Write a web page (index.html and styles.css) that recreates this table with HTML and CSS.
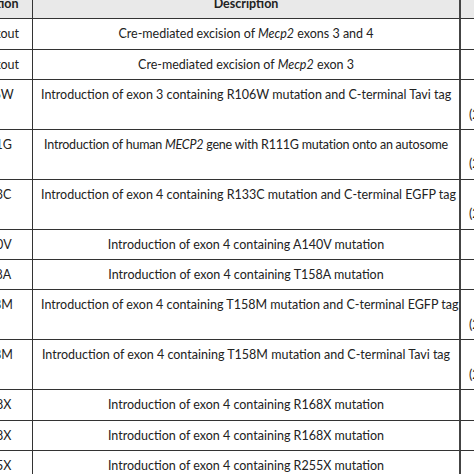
FILE: index.html
```html
<!DOCTYPE html>
<html lang="en">
<head>
<meta charset="utf-8">
<title>Mecp2 mouse models</title>
<link rel="stylesheet" href="styles.css">
</head>
<body>
<div class="viewport">
<table class="models">
  <colgroup>
    <col class="c-mut">
    <col class="c-desc">
    <col class="c-ref">
  </colgroup>
  <thead>
    <tr>
      <th class="mut">Mutation</th>
      <th class="desc">Description</th>
      <th class="ref">Reference</th>
    </tr>
  </thead>
  <tbody>
    <tr>
      <td class="mut">Knockout</td>
      <td class="desc">Cre-mediated excision of <i>Mecp2</i> exons 3 and 4</td>
      <td class="ref">Guy et al, 2001</td>
    </tr>
    <tr>
      <td class="mut">Knockout</td>
      <td class="desc">Cre-mediated excision of <i>Mecp2</i> exon 3</td>
      <td class="ref">Chen et al, 2001</td>
    </tr>
    <tr>
      <td class="mut">R106W</td>
      <td class="desc">Introduction of exon 3 containing R106W mutation and C-terminal Tavi tag</td>
      <td class="ref">Johnson et al<br>(2017)</td>
    </tr>
    <tr>
      <td class="mut">R111G</td>
      <td class="desc tight">Introduction of human <i>MECP2</i> gene with R111G mutation onto an autosome</td>
      <td class="ref">Heckman et al<br>(2014)</td>
    </tr>
    <tr>
      <td class="mut">R133C</td>
      <td class="desc">Introduction of exon 4 containing R133C mutation and C-terminal EGFP tag</td>
      <td class="ref">Brown et al<br>(2016)</td>
    </tr>
    <tr>
      <td class="mut">A140V</td>
      <td class="desc">Introduction of exon 4 containing A140V mutation</td>
      <td class="ref">Jentarra et al, 2010</td>
    </tr>
    <tr>
      <td class="mut">T158A</td>
      <td class="desc">Introduction of exon 4 containing T158A mutation</td>
      <td class="ref">Goffin et al, 2012</td>
    </tr>
    <tr>
      <td class="mut">T158M</td>
      <td class="desc">Introduction of exon 4 containing T158M mutation and C-terminal EGFP tag</td>
      <td class="ref">Brown et al<br>(2016)</td>
    </tr>
    <tr>
      <td class="mut">T158M</td>
      <td class="desc">Introduction of exon 4 containing T158M mutation and C-terminal Tavi tag</td>
      <td class="ref">Johnson et al<br>(2017)</td>
    </tr>
    <tr>
      <td class="mut">R168X</td>
      <td class="desc">Introduction of exon 4 containing R168X mutation</td>
      <td class="ref">Lawson-Yuen et al, 2007</td>
    </tr>
    <tr>
      <td class="mut">R168X</td>
      <td class="desc">Introduction of exon 4 containing R168X mutation</td>
      <td class="ref">Wegener et al, 2014</td>
    </tr>
    <tr>
      <td class="mut">R255X</td>
      <td class="desc">Introduction of exon 4 containing R255X mutation</td>
      <td class="ref">Pitcher et al, 2015</td>
    </tr>
  </tbody>
</table>
</div>
</body>
</html>
```
FILE: styles.css
```css
html, body {
  margin: 0;
  padding: 0;
  background: #ffffff;
  overflow: hidden;
}

.viewport {
  width: 474px;
  height: 474px;
  overflow: hidden;
}

.models {
  table-layout: fixed;
  border-collapse: separate;
  border-spacing: 0;
  width: 640px;
  margin-top: -11px;
  margin-left: -47px;
  font-family: "Lato", "Open Sans", sans-serif;
  font-size: 12.5px;
  line-height: 19.4px;
  color: #222222;
}

.c-mut { width: 80px; }
.c-desc { width: 426px; }
.c-ref { width: 134px; }

.models th,
.models td {
  box-sizing: border-box;
  padding: 5px 8px;
  border-bottom: 1px solid #333333;
  vertical-align: top;
  white-space: nowrap;
  overflow: hidden;
}

.models .mut {
  border-right: 1px solid #333333;
  text-align: center;
}

.models .desc {
  text-align: center;
}

.models .ref {
  border-left: 2px solid #444444;
  text-align: left;
  text-indent: 30px;
}

.models thead th {
  background: #e9e9e9;
  font-weight: 700;
}

.models .tight {
  letter-spacing: -0.22px;
}
```
